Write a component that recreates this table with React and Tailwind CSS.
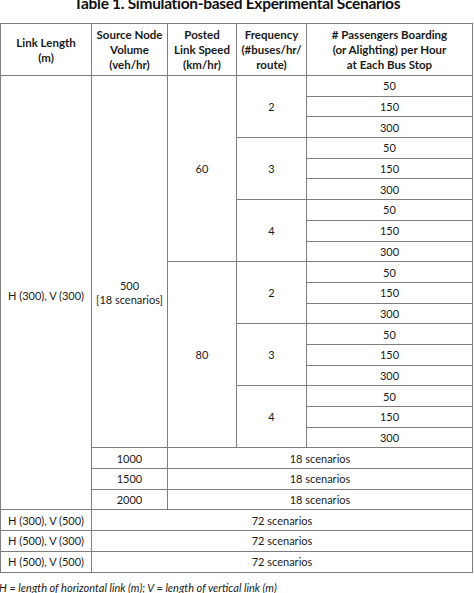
import React from 'react'

const font = { fontFamily: 'Lato, "Open Sans", sans-serif' }

const boarding = ['50', '150', '300']

export default function App() {
    // data rows start at grid row 2
    const speedBlocks = [
        { speed: '60', start: 'row-start-2' },
        { speed: '80', start: 'row-start-11' },
    ]
    const freqStarts = [
        ['row-start-2', 'row-start-5', 'row-start-8'],
        ['row-start-11', 'row-start-14', 'row-start-17'],
    ]
    const freqs = ['2', '3', '4']

    const cell = 'bg-white flex items-center justify-center text-center'

    return (
        <div className="w-[474px] h-[593px] overflow-hidden bg-white text-[#1a1a1a]" style={font}>
            <div className="h-[23px] flex items-start justify-center">
                <span className="-mt-[5px] leading-[16px] text-[15.5px] font-bold tracking-[-0.3px] text-[#111]">
                    Table 1. Simulation-based Experimental Scenarios
                </span>
            </div>

            <div className="w-[473px] grid grid-cols-[90px_75px_68px_69px_165px] grid-rows-[51px_repeat(24,19.7px)] gap-px p-px bg-[#7d7d7d] text-[11px] leading-none">
                {/* header */}
                <div className={`${cell} col-start-1 row-start-1 font-bold text-[11.5px] leading-[15px]`}>
                    Link Length<br />(m)
                </div>
                <div className={`${cell} col-start-2 row-start-1 font-bold text-[11.5px] leading-[15px]`}>
                    Source Node<br />Volume<br />(veh/hr)
                </div>
                <div className={`${cell} col-start-3 row-start-1 font-bold text-[11.5px] leading-[15px]`}>
                    Posted<br />Link Speed<br />(km/hr)
                </div>
                <div className={`${cell} col-start-4 row-start-1 font-bold text-[11.5px] leading-[15px]`}>
                    Frequency<br />(#buses/hr/<br />route)
                </div>
                <div className={`${cell} col-start-5 row-start-1 font-bold text-[11.5px] leading-[15px]`}>
                    # Passengers Boarding<br />(or Alighting) per Hour<br />at Each Bus Stop
                </div>

                {/* link length H300 V300 */}
                <div className={`${cell} col-start-1 row-start-2 row-span-21 pt-[6px]`}>H (300), V (300)</div>

                {/* source node volume 500 */}
                <div className={`${cell} col-start-2 row-start-2 row-span-18 pt-[62px] leading-[14px]`}>
                    500<br />[18 scenarios]
                </div>

                {speedBlocks.map((b, i) => (
                    <React.Fragment key={b.speed}>
                        <div className={`${cell} col-start-3 ${b.start} row-span-9`}>{b.speed}</div>
                        {freqs.map((f, j) => (
                            <div key={f} className={`${cell} col-start-4 ${freqStarts[i][j]} row-span-3`}>{f}</div>
                        ))}
                    </React.Fragment>
                ))}

                {Array.from({ length: 18 }).map((_, k) => (
                    <div key={k} className={`${cell} col-start-5`}>{boarding[k % 3]}</div>
                ))}

                {['1000', '1500', '2000'].map((v) => (
                    <React.Fragment key={v}>
                        <div className={`${cell} col-start-2`}>{v}</div>
                        <div className={`${cell} col-start-3 col-span-3`}>18 scenarios</div>
                    </React.Fragment>
                ))}

                {['H (300), V (500)', 'H (500), V (300)', 'H (500), V (500)'].map((v) => (
                    <React.Fragment key={v}>
                        <div className={`${cell} col-start-1`}>{v}</div>
                        <div className={`${cell} col-start-2 col-span-4`}>72 scenarios</div>
                    </React.Fragment>
                ))}
            </div>

            <div className="mt-[9px] -ml-[1px] text-[11px] italic leading-none text-[#1a1a1a]">
                H = length of horizontal link (m); V = length of vertical link (m)
            </div>
        </div>
    )
}
